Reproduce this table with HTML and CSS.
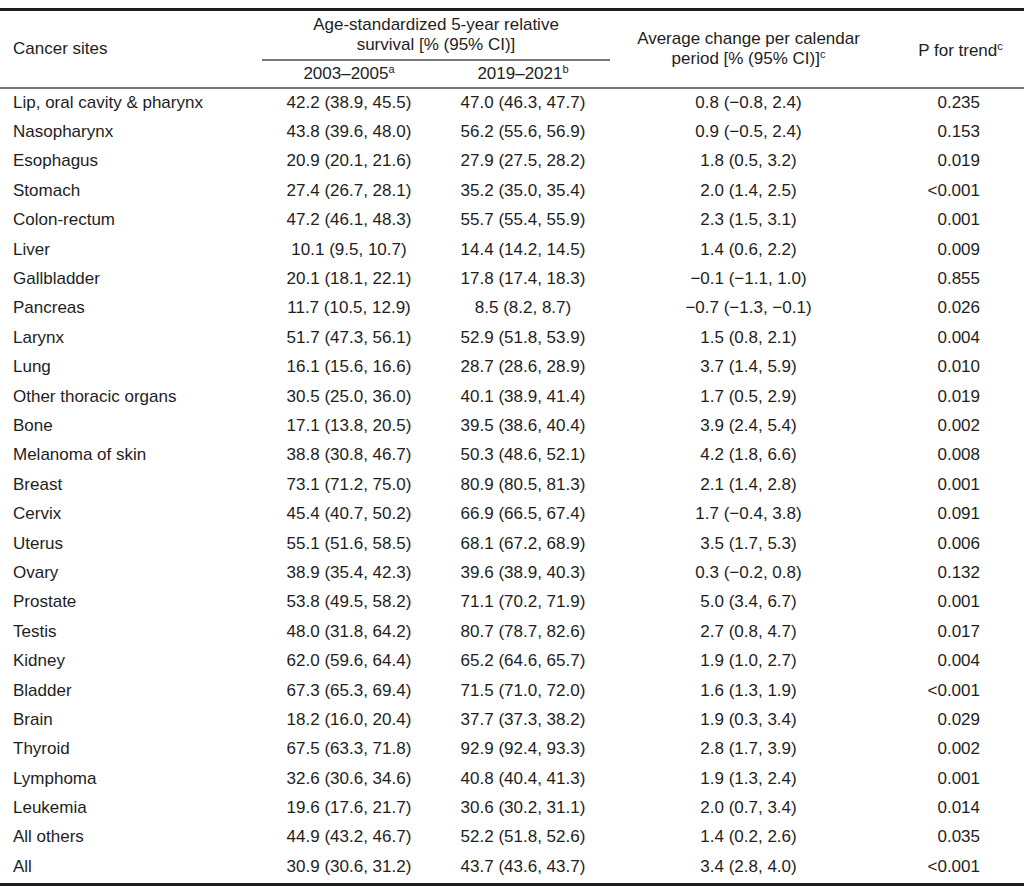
FILE: index.html
```html
<!DOCTYPE html>
<html lang="en">
  <head>
    <meta charset="utf-8" />
    <meta name="viewport" content="width=device-width, initial-scale=1.0" />
    <link rel="stylesheet" href="styles.css">
  </head>
  <body>
    <table class="survival">
      <colgroup>
        <col class="col-site" />
        <col class="col-period" />
        <col class="col-period" />
        <col class="col-change" />
        <col class="col-trend" />
      </colgroup>
      <thead>
        <tr class="head-top">
          <th rowspan="2" class="site">Cancer sites</th>
          <th colspan="2" class="group">Age-standardized 5-year relative<br />survival [% (95% CI)]</th>
          <th rowspan="2" class="change">Average change per calendar<br />period [% (95% CI)]<sup>c</sup></th>
          <th rowspan="2" class="trend">P for trend<sup>c</sup></th>
        </tr>
        <tr class="head-sub">
          <th>2003–2005<sup>a</sup></th>
          <th>2019–2021<sup>b</sup></th>
        </tr>
      </thead>
      <tbody>
        <tr><td class="site">Lip, oral cavity &amp; pharynx</td><td>42.2 (38.9, 45.5)</td><td>47.0 (46.3, 47.7)</td><td>0.8 (−0.8, 2.4)</td><td class="trend">0.235</td></tr>
        <tr><td class="site">Nasopharynx</td><td>43.8 (39.6, 48.0)</td><td>56.2 (55.6, 56.9)</td><td>0.9 (−0.5, 2.4)</td><td class="trend">0.153</td></tr>
        <tr><td class="site">Esophagus</td><td>20.9 (20.1, 21.6)</td><td>27.9 (27.5, 28.2)</td><td>1.8 (0.5, 3.2)</td><td class="trend">0.019</td></tr>
        <tr><td class="site">Stomach</td><td>27.4 (26.7, 28.1)</td><td>35.2 (35.0, 35.4)</td><td>2.0 (1.4, 2.5)</td><td class="trend">&lt;0.001</td></tr>
        <tr><td class="site">Colon-rectum</td><td>47.2 (46.1, 48.3)</td><td>55.7 (55.4, 55.9)</td><td>2.3 (1.5, 3.1)</td><td class="trend">0.001</td></tr>
        <tr><td class="site">Liver</td><td>10.1 (9.5, 10.7)</td><td>14.4 (14.2, 14.5)</td><td>1.4 (0.6, 2.2)</td><td class="trend">0.009</td></tr>
        <tr><td class="site">Gallbladder</td><td>20.1 (18.1, 22.1)</td><td>17.8 (17.4, 18.3)</td><td>−0.1 (−1.1, 1.0)</td><td class="trend">0.855</td></tr>
        <tr><td class="site">Pancreas</td><td>11.7 (10.5, 12.9)</td><td>8.5 (8.2, 8.7)</td><td>−0.7 (−1.3, −0.1)</td><td class="trend">0.026</td></tr>
        <tr><td class="site">Larynx</td><td>51.7 (47.3, 56.1)</td><td>52.9 (51.8, 53.9)</td><td>1.5 (0.8, 2.1)</td><td class="trend">0.004</td></tr>
        <tr><td class="site">Lung</td><td>16.1 (15.6, 16.6)</td><td>28.7 (28.6, 28.9)</td><td>3.7 (1.4, 5.9)</td><td class="trend">0.010</td></tr>
        <tr><td class="site">Other thoracic organs</td><td>30.5 (25.0, 36.0)</td><td>40.1 (38.9, 41.4)</td><td>1.7 (0.5, 2.9)</td><td class="trend">0.019</td></tr>
        <tr><td class="site">Bone</td><td>17.1 (13.8, 20.5)</td><td>39.5 (38.6, 40.4)</td><td>3.9 (2.4, 5.4)</td><td class="trend">0.002</td></tr>
        <tr><td class="site">Melanoma of skin</td><td>38.8 (30.8, 46.7)</td><td>50.3 (48.6, 52.1)</td><td>4.2 (1.8, 6.6)</td><td class="trend">0.008</td></tr>
        <tr><td class="site">Breast</td><td>73.1 (71.2, 75.0)</td><td>80.9 (80.5, 81.3)</td><td>2.1 (1.4, 2.8)</td><td class="trend">0.001</td></tr>
        <tr><td class="site">Cervix</td><td>45.4 (40.7, 50.2)</td><td>66.9 (66.5, 67.4)</td><td>1.7 (−0.4, 3.8)</td><td class="trend">0.091</td></tr>
        <tr><td class="site">Uterus</td><td>55.1 (51.6, 58.5)</td><td>68.1 (67.2, 68.9)</td><td>3.5 (1.7, 5.3)</td><td class="trend">0.006</td></tr>
        <tr><td class="site">Ovary</td><td>38.9 (35.4, 42.3)</td><td>39.6 (38.9, 40.3)</td><td>0.3 (−0.2, 0.8)</td><td class="trend">0.132</td></tr>
        <tr><td class="site">Prostate</td><td>53.8 (49.5, 58.2)</td><td>71.1 (70.2, 71.9)</td><td>5.0 (3.4, 6.7)</td><td class="trend">0.001</td></tr>
        <tr><td class="site">Testis</td><td>48.0 (31.8, 64.2)</td><td>80.7 (78.7, 82.6)</td><td>2.7 (0.8, 4.7)</td><td class="trend">0.017</td></tr>
        <tr><td class="site">Kidney</td><td>62.0 (59.6, 64.4)</td><td>65.2 (64.6, 65.7)</td><td>1.9 (1.0, 2.7)</td><td class="trend">0.004</td></tr>
        <tr><td class="site">Bladder</td><td>67.3 (65.3, 69.4)</td><td>71.5 (71.0, 72.0)</td><td>1.6 (1.3, 1.9)</td><td class="trend">&lt;0.001</td></tr>
        <tr><td class="site">Brain</td><td>18.2 (16.0, 20.4)</td><td>37.7 (37.3, 38.2)</td><td>1.9 (0.3, 3.4)</td><td class="trend">0.029</td></tr>
        <tr><td class="site">Thyroid</td><td>67.5 (63.3, 71.8)</td><td>92.9 (92.4, 93.3)</td><td>2.8 (1.7, 3.9)</td><td class="trend">0.002</td></tr>
        <tr><td class="site">Lymphoma</td><td>32.6 (30.6, 34.6)</td><td>40.8 (40.4, 41.3)</td><td>1.9 (1.3, 2.4)</td><td class="trend">0.001</td></tr>
        <tr><td class="site">Leukemia</td><td>19.6 (17.6, 21.7)</td><td>30.6 (30.2, 31.1)</td><td>2.0 (0.7, 3.4)</td><td class="trend">0.014</td></tr>
        <tr><td class="site">All others</td><td>44.9 (43.2, 46.7)</td><td>52.2 (51.8, 52.6)</td><td>1.4 (0.2, 2.6)</td><td class="trend">0.035</td></tr>
        <tr><td class="site">All</td><td>30.9 (30.6, 31.2)</td><td>43.7 (43.6, 43.7)</td><td>3.4 (2.8, 4.0)</td><td class="trend">&lt;0.001</td></tr>
      </tbody>
    </table>
  </body>
</html>
```

FILE: styles.css
```css
body {
  margin: 0;
  background-color: #fff;
  color: #1e1e1e;
  font-family: "Liberation Sans", Arial, sans-serif;
  font-size: 17px;
}

.survival {
  width: 1024px;
  margin-top: 8px;
  border-collapse: collapse;
  table-layout: fixed;
  border-top: 3px solid #1e1e1e;
  border-bottom: 3px solid #1e1e1e;
}

.col-site { width: 262px; }
.col-period { width: 174px; }
.col-change { width: 277px; }
.col-trend { width: 137px; }

th {
  font-weight: normal;
  text-align: center;
  vertical-align: middle;
  line-height: 20px;
  padding: 0;
}

thead {
  border-bottom: 2px solid #777;
}

.head-top th {
  height: 48px;
}

/* cell height adds the padding on top */
.head-top .group {
  height: 40px;
  padding-top: 4px;
  padding-bottom: 4px;
  border-bottom: 2px solid #777;
}

.head-sub th {
  height: 26px;
}

th.site,
td.site {
  text-align: left;
  padding-left: 13px;
}

th.trend {
  padding-left: 10px;
  padding-top: 3px;
}

td {
  height: 27.4px;
  padding: 0 0 2px;
  text-align: center;
  vertical-align: middle;
}

td.trend {
  text-align: right;
  padding-right: 44px;
}

sup {
  font-size: 11px;
  line-height: 0;
  vertical-align: 6px;
}
```
